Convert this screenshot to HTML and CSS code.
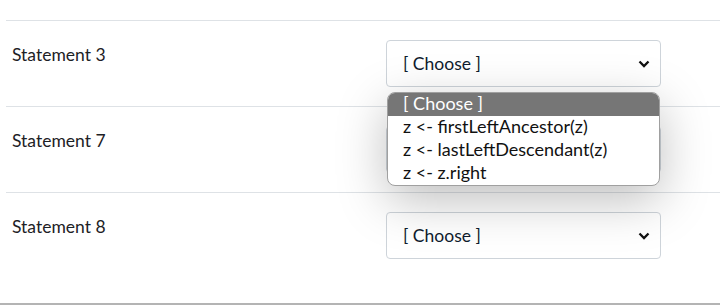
FILE: index.html
```html
<!DOCTYPE html>
<html lang="en">
<head>
    <meta charset="UTF-8">
    <title>Matching question</title>
    <link rel="stylesheet" href="styles.css">
</head>
<body>
    <div class="question">
        <table class="answer">
            <tr>
                <td class="text">Statement 3</td>
                <td class="control">
                    <div class="select-wrap">
                        <div class="select">
                            <span>[ Choose ]</span>
                            <svg class="chevron" width="12" height="8" viewBox="0 0 12 8"><path d="M1.5 1.5 L6 6 L10.5 1.5" fill="none" stroke="#111" stroke-width="2.3"/></svg>
                        </div>
                        <ul class="dropdown">
                            <li class="selected">[ Choose ]</li>
                            <li>z &lt;- firstLeftAncestor(z)</li>
                            <li>z &lt;- lastLeftDescendant(z)</li>
                            <li>z &lt;- z.right</li>
                        </ul>
                    </div>
                </td>
            </tr>
            <tr>
                <td class="text">Statement 7</td>
                <td class="control">
                    <div class="select">
                        <span>[ Choose ]</span>
                        <svg class="chevron" width="12" height="8" viewBox="0 0 12 8"><path d="M1.5 1.5 L6 6 L10.5 1.5" fill="none" stroke="#111" stroke-width="2.3"/></svg>
                    </div>
                </td>
            </tr>
            <tr>
                <td class="text">Statement 8</td>
                <td class="control">
                    <div class="select">
                        <span>[ Choose ]</span>
                        <svg class="chevron" width="12" height="8" viewBox="0 0 12 8"><path d="M1.5 1.5 L6 6 L10.5 1.5" fill="none" stroke="#111" stroke-width="2.3"/></svg>
                    </div>
                </td>
            </tr>
        </table>
    </div>
    <div class="footer-line"></div>
</body>
</html>
```

FILE: styles.css
```css
body {
    font-family: Lato, 'Open Sans', Arial, sans-serif;
    font-size: 17.5px;
    margin: 0;
    padding: 0;
    color: #1d2125;
    background-color: #fff;
}
.question {
    padding: 20px 0 0 6px;
}
.answer {
    width: 100%;
    border-collapse: collapse;
}
.answer td {
    border-top: 1px solid #dee2e6;
    vertical-align: top;
}
.text {
    width: 368px;
    padding: 22px 6px 0 6px;
    line-height: 24px;
}
.control {
    padding: 19px 0 19px 0;
}
.select-wrap {
    position: relative;
}
.select {
    box-sizing: border-box;
    width: 275px;
    height: 47px;
    border: 1px solid #ced4da;
    border-radius: 4px;
    display: flex;
    align-items: center;
    justify-content: space-between;
    padding: 0 10px 0 16px;
    color: #0f1c2e;
}
.chevron {
    display: block;
}
.dropdown {
    position: absolute;
    top: 52px;
    left: 1px;
    width: 273px;
    box-sizing: border-box;
    margin: 0;
    padding: 0;
    list-style: none;
    font-size: 18px;
    background: #fff;
    border: 1px solid #a0a0a0;
    border-radius: 8px;
    overflow: hidden;
    box-shadow: 0 14px 50px rgba(0, 0, 0, 0.26);
    z-index: 2;
}
.dropdown li {
    height: 21px;
    line-height: 21px;
    padding: 0 0 2px 15px;
    color: #111;
}
.dropdown li.selected {
    background: #767676;
    color: #fff;
}
.footer-line {
    margin-top: 25px;
    border-top: 2px solid #b4b4b4;
}
```
